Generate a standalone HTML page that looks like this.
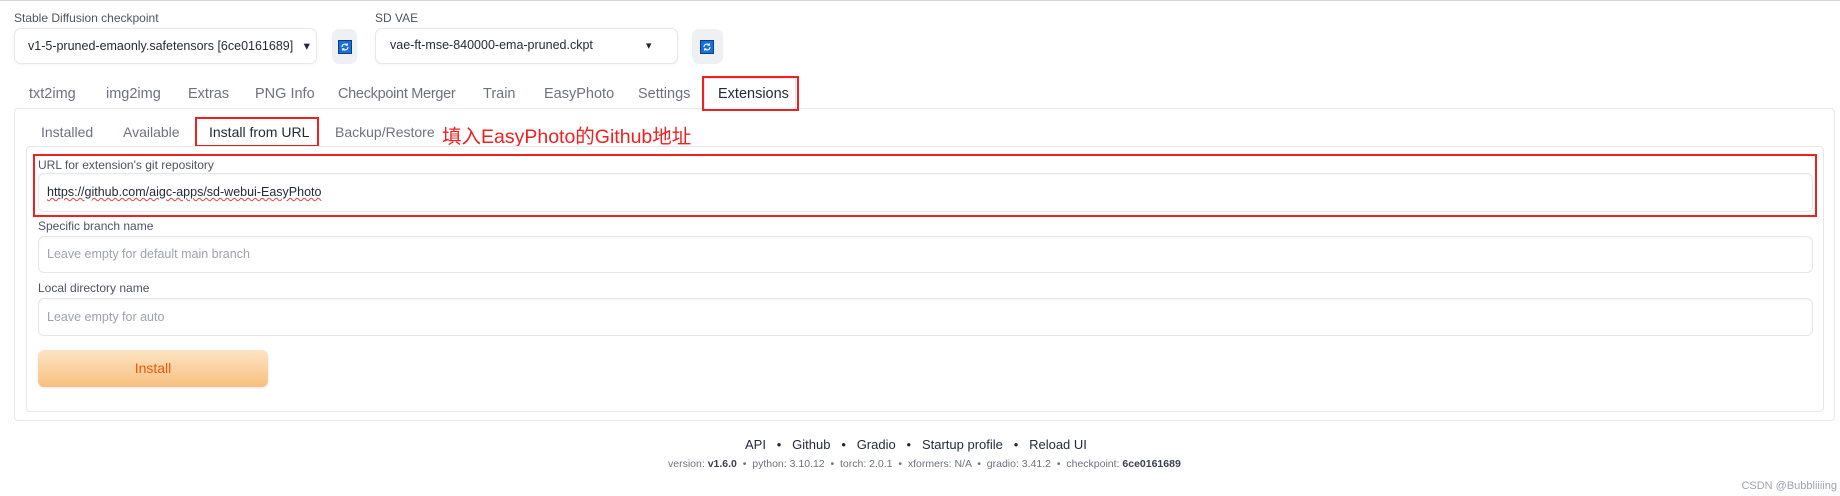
<!DOCTYPE html>
<html><head><meta charset="utf-8"><style>
*{box-sizing:border-box;margin:0;padding:0}
body{width:1840px;height:496px;background:#fff;font-family:"Liberation Sans","Noto Sans CJK SC",sans-serif;position:relative;overflow:hidden;color:#374151}
.a{position:absolute;white-space:nowrap}
.lbl{font-size:12px;color:#4b5563}
.dd{border:1px solid #e5e7eb;border-radius:7px;background:#fff;box-shadow:0 1px 2px rgba(0,0,0,.05)}
.rb{background:#eef0f3;border-radius:7px}
.ic{width:14px;height:14px;background:#1a6fd6;border:1px solid #0b3e8a}
.tab{font-size:14.5px;color:#6b7280;top:86px}
.st{font-size:14px;color:#6b7280;top:124px}
.inp{border:1px solid #e5e7eb;border-radius:6px;background:#fff;box-shadow:inset 0 1px 2px rgba(0,0,0,.04)}
.ph{font-size:12.5px;color:#9ca3af}
.red{border:2px solid #f02020}
</style></head><body>
<div class="a" style="left:0;top:0;width:1840px;height:1px;background:#d4d4d4"></div>
<div class="a lbl" style="left:14px;top:11px">Stable Diffusion checkpoint</div>
<div class="a dd" style="left:14px;top:28px;width:303px;height:36px"></div>
<div class="a" style="left:28px;top:38px;font-size:12.5px;color:#1f2937">v1-5-pruned-emaonly.safetensors [6ce0161689]&nbsp;&nbsp;&nbsp;▾</div>
<div class="a rb" style="left:332px;top:29px;width:25px;height:35px"></div>
<svg class="a ic" style="left:338px;top:40px" viewBox="0 0 14 14"><path d="M3.5 7a3.5 3.5 0 0 1 6-2.4M10.5 7a3.5 3.5 0 0 1-6 2.4" stroke="#fff" stroke-width="1.3" fill="none"/><path d="M9.8 2.8v2.2H7.6M4.2 11.2V9h2.2" stroke="#fff" stroke-width="1.1" fill="none"/></svg>
<div class="a lbl" style="left:375px;top:11px">SD VAE</div>
<div class="a dd" style="left:375px;top:28px;width:303px;height:36px"></div>
<div class="a" style="left:390px;top:38px;font-size:12.5px;color:#1f2937">vae-ft-mse-840000-ema-pruned.ckpt</div>
<div class="a" style="left:646px;top:39px;font-size:11px;color:#1f2937">▾</div>
<div class="a rb" style="left:692px;top:29px;width:31px;height:35px"></div>
<svg class="a ic" style="left:700px;top:40px" viewBox="0 0 14 14"><path d="M3.5 7a3.5 3.5 0 0 1 6-2.4M10.5 7a3.5 3.5 0 0 1-6 2.4" stroke="#fff" stroke-width="1.3" fill="none"/><path d="M9.8 2.8v2.2H7.6M4.2 11.2V9h2.2" stroke="#fff" stroke-width="1.1" fill="none"/></svg>

<div class="a tab" style="left:29px">txt2img</div>
<div class="a tab" style="left:106px">img2img</div>
<div class="a tab" style="left:188px">Extras</div>
<div class="a tab" style="left:255px">PNG Info</div>
<div class="a tab" style="left:338px;letter-spacing:-0.3px">Checkpoint Merger</div>
<div class="a tab" style="left:483px">Train</div>
<div class="a tab" style="left:544px">EasyPhoto</div>
<div class="a tab" style="left:638px">Settings</div>
<div class="a" style="left:14px;top:108px;width:1821px;height:313px;border:1px solid #e5e7eb;border-radius:4px"></div>
<div class="a" style="left:704px;top:78px;width:92px;height:32px;background:#fff;border:1px solid #e5e7eb;border-bottom:none"></div>
<div class="a red" style="left:702px;top:76px;width:97px;height:35px"></div>
<div class="a tab" style="left:718px;color:#1f2937">Extensions</div>

<div class="a st" style="left:41px">Installed</div>
<div class="a st" style="left:123px">Available</div>
<div class="a red" style="left:195px;top:117px;width:124px;height:30px"></div>
<div class="a st" style="left:209px;color:#1f2937">Install from URL</div>
<div class="a st" style="left:335px">Backup/Restore</div>
<div class="a" style="left:442px;top:120px;font-size:19.5px;color:#f02020">填入EasyPhoto的Github地址</div>

<div class="a" style="left:26px;top:146px;width:1798px;height:266px;border:1px solid #e5e7eb;border-radius:4px"></div>
<div class="a red" style="left:33px;top:154px;width:1784px;height:63px"></div>
<div class="a lbl" style="left:38px;top:158px">URL for extension's git repository</div>
<div class="a inp" style="left:38px;top:173px;width:1775px;height:39px"></div>
<div class="a" style="left:47px;top:185px;font-size:12.5px;color:#1f2937;text-decoration:underline wavy #e04040;text-decoration-thickness:1px">https://github.com/aigc-apps/sd-webui-EasyPhoto</div>
<div class="a lbl" style="left:38px;top:219px">Specific branch name</div>
<div class="a inp" style="left:38px;top:236px;width:1775px;height:37px"></div>
<div class="a ph" style="left:47px;top:247px">Leave empty for default main branch</div>
<div class="a lbl" style="left:38px;top:281px">Local directory name</div>
<div class="a inp" style="left:38px;top:298px;width:1775px;height:38px"></div>
<div class="a ph" style="left:47px;top:310px">Leave empty for auto</div>
<div class="a" style="left:38px;top:350px;width:230px;height:37px;border-radius:6px;background:linear-gradient(180deg,#fde4c4,#f7c07e);box-shadow:0 1px 2px rgba(0,0,0,.1);color:#ea580c;font-size:14px;text-align:center;line-height:37px">Install</div>

<div class="a" style="left:745px;top:437px;font-size:13px;color:#1f2937">API &nbsp;&nbsp;•&nbsp;&nbsp; Github &nbsp;&nbsp;•&nbsp;&nbsp; Gradio &nbsp;&nbsp;•&nbsp;&nbsp; Startup profile &nbsp;&nbsp;•&nbsp;&nbsp; Reload UI</div>
<div class="a" style="left:668px;top:458px;font-size:10.5px;color:#6b7280">version: <b style="color:#374151">v1.6.0</b> &nbsp;•&nbsp; python: 3.10.12 &nbsp;•&nbsp; torch: 2.0.1 &nbsp;•&nbsp; xformers: N/A &nbsp;•&nbsp; gradio: 3.41.2 &nbsp;•&nbsp; checkpoint: <b style="color:#374151">6ce0161689</b></div>
<div class="a" style="right:3px;top:480px;font-size:11px;color:#9ca3af">CSDN @Bubbliiiing</div>
</body></html>
